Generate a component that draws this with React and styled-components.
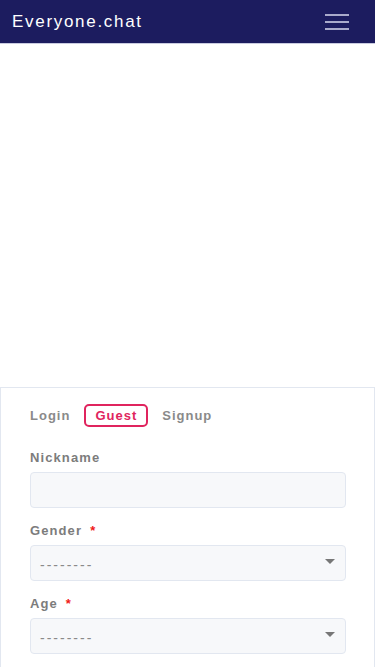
import React from 'react';
import styled, { createGlobalStyle } from 'styled-components';

const Global = createGlobalStyle`
  html, body { margin: 0; padding: 0; background: #fff; }
  body { font-family: "Liberation Sans", Arial, sans-serif; }
  * { box-sizing: border-box; }
`;

const Page = styled.div`
  width: 375px;
  height: 667px;
  display: flex;
  flex-direction: column;
  overflow: hidden;
`;

const NavBar = styled.header`
  flex-shrink: 0;
  height: 44px;
  background: #1c1c5f;
  display: flex;
  align-items: center;
  justify-content: space-between;
  padding: 0 26px 0 12px;
  border-bottom: 1px solid #c9cbe0;
`;

const Brand = styled.div`
  color: #fff;
  font-size: 17px;
  letter-spacing: 1.7px;
  padding-top: 1px;
`;

const Burger = styled.button`
  width: 24px;
  height: 16px;
  padding: 0;
  border: none;
  background: none;
  display: flex;
  flex-direction: column;
  justify-content: space-between;
`;

const BurgerLine = styled.span`
  display: block;
  height: 2px;
  width: 100%;
  background: #a9aacb;
`;

const Blank = styled.div`
  flex-shrink: 0;
  height: 343px;
`;

const Card = styled.section`
  flex-shrink: 0;
  border: 1px solid #e2e7f0;
  border-bottom: none;
  padding: 16px 29px 0 29px;
`;

const Tabs = styled.nav`
  display: flex;
  align-items: center;
  gap: 14px;
  margin-bottom: 23px;
`;

const Tab = styled.span`
  font-size: 13px;
  font-weight: 700;
  letter-spacing: 1px;
  color: ${p => (p.$active ? '#e0245e' : '#8a8a8a')};
  border: ${p => (p.$active ? '2px solid #e0245e' : 'none')};
  border-radius: 5px;
  padding: ${p => (p.$active ? '0 9px' : '0')};
  height: 23px;
  display: flex;
  align-items: center;
`;

const Field = styled.div`
  display: flex;
  flex-direction: column;
  margin-bottom: 15px;
`;

const Label = styled.label`
  font-size: 13px;
  font-weight: 700;
  letter-spacing: 1.1px;
  color: #7c7c7c;
  margin-bottom: 7px;
  display: flex;
  gap: 8px;
`;

const Star = styled.span`
  color: #f01818;
`;

const Input = styled.div`
  height: 36px;
  width: 316px;
  background: #f7f8fa;
  border: 1px solid #e2e7f0;
  border-radius: 4px;
  display: flex;
  align-items: center;
  justify-content: space-between;
  padding: 4px 10px 0 9px;
  color: #8a8a8a;
  font-size: 14px;
  letter-spacing: 2px;
`;

const Caret = styled.span`
  width: 0;
  height: 0;
  border-left: 5px solid transparent;
  border-right: 5px solid transparent;
  border-top: 5px solid #777;
  margin-top: -8px;
`;

export default function App() {
  return (
    <Page>
      <Global />
      <NavBar>
        <Brand>Everyone.chat</Brand>
        <Burger aria-label="menu">
          <BurgerLine />
          <BurgerLine />
          <BurgerLine />
        </Burger>
      </NavBar>
      <Blank />
      <Card>
        <Tabs>
          <Tab>Login</Tab>
          <Tab $active>Guest</Tab>
          <Tab>Signup</Tab>
        </Tabs>
        <Field>
          <Label>Nickname</Label>
          <Input />
        </Field>
        <Field>
          <Label>Gender <Star>*</Star></Label>
          <Input>--------<Caret /></Input>
        </Field>
        <Field>
          <Label>Age <Star>*</Star></Label>
          <Input>--------<Caret /></Input>
        </Field>
      </Card>
    </Page>
  );
}
